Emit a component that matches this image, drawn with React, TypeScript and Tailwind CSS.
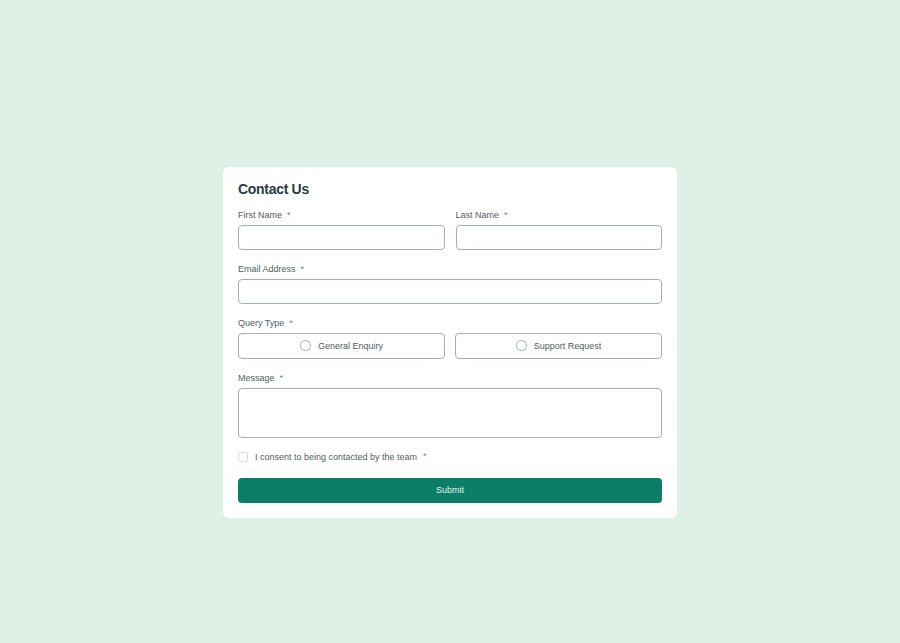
import React from "react";

const font = { fontFamily: '"Liberation Sans", Arial, sans-serif' };

function Label({ text }: { text: string }) {
  return (
    <div className="flex items-center h-[12px] text-[9px] leading-[12px] text-[#4d5d5e]">
      <span>{text}</span>
      <span className="ml-[5px] text-[#3e9a87]">*</span>
    </div>
  );
}

function Input() {
  return <div className="h-[25px] w-full rounded-[4px] border border-[#9fb1b2] bg-white" />;
}

function Radio({ text }: { text: string }) {
  return (
    <div className="h-[26px] flex items-center justify-center gap-[7px] rounded-[4px] border border-[#9fb1b2] bg-white">
      <span className="w-[11px] h-[11px] rounded-full border border-[#9fb1b2] mt-[-2px]" />
      <span className="text-[9px] leading-[12px] text-[#4d5d5e]">{text}</span>
    </div>
  );
}

export default function App() {
  return (
    <div className="min-h-[643px] w-full bg-[#dff1e7] pt-[167px]" style={font}>
      <div className="mx-auto w-[454px] rounded-[6px] bg-white px-[15px] pt-[13px] pb-[15px]">
        <h1 className="text-[14px] leading-[18px] font-bold tracking-[-0.3px] text-[#2a3b3c]">Contact Us</h1>
        <div className="mt-[11px] flex flex-col gap-[13px]">
          <div className="grid grid-cols-2 gap-[11px]">
            <div className="flex flex-col gap-[4px]">
              <Label text="First Name" />
              <Input />
            </div>
            <div className="flex flex-col gap-[4px]">
              <Label text="Last Name" />
              <Input />
            </div>
          </div>
          <div className="flex flex-col gap-[4px]">
            <Label text="Email Address" />
            <Input />
          </div>
          <div className="flex flex-col gap-[4px]">
            <Label text="Query Type" />
            <div className="grid grid-cols-2 gap-[10px]">
              <Radio text="General Enquiry" />
              <Radio text="Support Request" />
            </div>
          </div>
          <div className="flex flex-col gap-[4px]">
            <Label text="Message" />
            <div className="h-[50px] w-full rounded-[4px] border border-[#9fb1b2] bg-white" />
          </div>
          <div className="flex items-center h-[12px] gap-[7px]">
            <span className="w-[10px] h-[10px] rounded-[2px] border border-[#d5dfdf] bg-white" />
            <span className="text-[9px] leading-[12px] text-[#4d5d5e]">I consent to being contacted by the team</span>
            <span className="ml-[-1px] text-[9px] text-[#3e9a87]">*</span>
          </div>
        </div>
        <button className="mt-[15px] h-[25px] w-full rounded-[4px] bg-[#0c7d69] text-[9px] text-white/90">Submit</button>
      </div>
    </div>
  );
}
